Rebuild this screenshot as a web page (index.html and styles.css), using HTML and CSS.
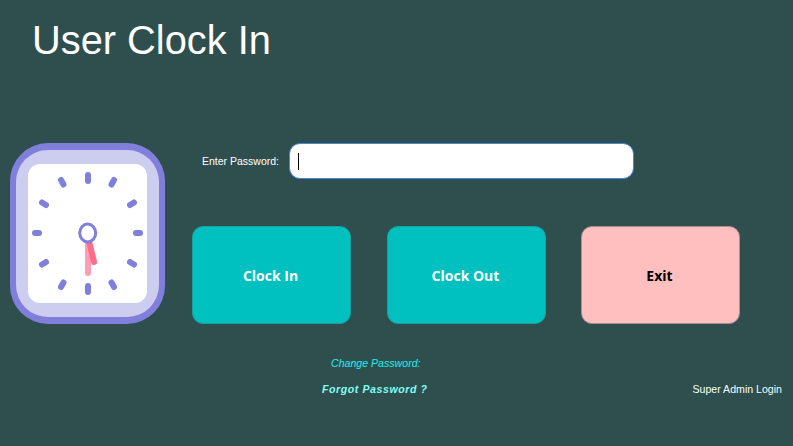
FILE: index.html
```html
<!DOCTYPE html>
<html lang="en">
<head>
    <meta charset="UTF-8">
    <meta name="viewport" content="width=device-width, initial-scale=1.0">
    <title>User Clock In</title>
    <link rel="stylesheet" href="styles.css">
</head>
<body>
    <div class="page">
      <h1 class="title">User Clock In</h1>

      <div class="main">
        <svg class="clock" width="155" height="181" viewBox="10 143 155 181">
          <rect x="10" y="143" width="155" height="181" rx="38" fill="#8080dc"/>
          <rect x="16" y="150" width="143" height="167" rx="32" fill="#cdcdf0"/>
          <rect x="28" y="164" width="119" height="139" rx="12" fill="#fff"/>
          <g class="ticks">
            <path d="M88 175V181"/>
            <path d="M88 286V292"/>
            <path d="M35 233H39"/>
            <path d="M136 233H140"/>
            <path d="M61 180L63.500 184.500"/>
            <path d="M114 180L111.500 184.500"/>
            <path d="M42 202.500L46 205"/>
            <path d="M134 202.500L130 205"/>
            <path d="M42 264.500L46 262"/>
            <path d="M134 264.500L130 262"/>
            <path d="M61 287L63.500 282.500"/>
            <path d="M114 287L111.500 282.500"/>
          </g>
          <path class="hand-long" d="M88 243V273"/>
          <path class="hand-short" d="M89.500 243L94 262"/>
          <ellipse cx="87.700" cy="233" rx="8" ry="9" fill="#fff" stroke="#8080dc" stroke-width="3"/>
        </svg>

        <div class="panel">
          <div class="password-row">
            <label class="lbl">Enter Password:</label>
            <div class="password-box"><span class="caret"></span></div>
          </div>
          <div class="buttons">
            <button class="btn btn-teal">Clock In</button>
            <button class="btn btn-teal">Clock Out</button>
            <button class="btn btn-pink">Exit</button>
          </div>
        </div>
      </div>

      <div class="links">
        <a class="change-link">Change Password:</a>
        <div class="links-row">
          <a class="forgot-link">Forgot Password ?</a>
          <a class="admin-link">Super Admin Login</a>
        </div>
      </div>
    </div>
</body>
</html>
```

FILE: styles.css
```css
body{
  margin: 0;
  background-color: #2f4f4f;
  font-family: "Liberation Sans", Arial, sans-serif;
}

.page{
  height: 446px;
  overflow: hidden;
  display: flex;
  flex-direction: column;
}

.title{
  margin: 17px 0 0 32px;
  color: white;
  font-size: 39.800px;
  font-weight: normal;
  line-height: 46px;
}

.main{
  display: flex;
  margin: 80px 0 0 10px;
  gap: 27px;
}

.clock{
  display: block;
  flex: none;
}

.ticks path{
  fill: none;
  stroke: #8080dc;
  stroke-width: 6;
  stroke-linecap: round;
}

.hand-long, .hand-short{
  fill: none;
  stroke-width: 6;
  stroke-linecap: round;
}

.hand-long{
  stroke: #ff9db5;
}

.hand-short{
  stroke: #ff6d8d;
}

.panel{
  display: flex;
  flex-direction: column;
  gap: 47px;
}

.password-row{
  display: flex;
  align-items: center;
  padding-left: 10px;
  gap: 10px;
}

.lbl{
  color: white;
  font-size: 10.500px;
  width: 77px;
  white-space: nowrap;
}

.password-box{
  box-sizing: border-box;
  width: 345px;
  height: 36px;
  display: flex;
  align-items: center;
  padding-left: 8px;
  background-color: white;
  border: 1px solid #4a86d8;
  border-radius: 11px;
}

.caret{
  width: 1px;
  height: 17px;
  background-color: black;
}

.buttons{
  display: flex;
  gap: 36px;
}

.btn{
  box-sizing: border-box;
  width: 159px;
  height: 98px;
  padding: 0 2px 0 0;
  border: 1px solid;
  border-radius: 11px;
  font-family: "Open Sans", "Noto Sans", sans-serif;
  font-size: 14px;
  font-weight: bold;
}

.btn-teal{
  background-color: #00c0c0;
  border-color: #17a0a2;
  color: white;
}

.btn-pink{
  margin-left: -1px;
  background-color: #ffbfbf;
  border-color: #a99092;
  color: black;
}

.links{
  margin-top: 32px;
  font-size: 10.600px;
  line-height: 14px;
}

.change-link{
  display: block;
  margin-left: 331px;
  color: #1ef0f0;
  font-style: italic;
}

.links-row{
  display: flex;
  justify-content: space-between;
  margin: 12px 11px 0 322px;
}

.forgot-link{
  color: #7ffff4;
  font-style: italic;
  font-weight: bold;
  letter-spacing: 0.570px;
}

.admin-link{
  color: #f5fffa;
}
```
